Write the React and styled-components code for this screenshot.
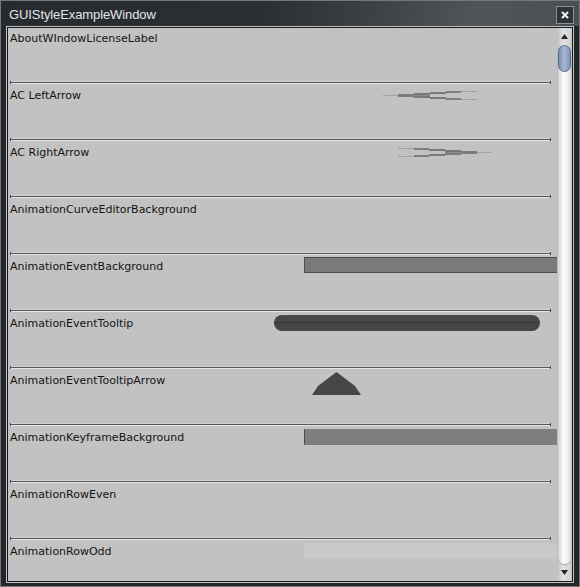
import React from 'react';
import styled, { createGlobalStyle } from 'styled-components';

const GlobalStyle = createGlobalStyle`
  html, body {
    margin: 0;
    padding: 0;
    background: #1f2226;
  }
`;

const Window = styled.div`
  width: 580px;
  height: 587px;
  box-sizing: border-box;
  border: 1px solid #74787c;
  background: #23272b;
  padding: 0 5px 3px 5px;
  display: flex;
  flex-direction: column;
  overflow: hidden;
`;

const TitleBar = styled.div`
  height: 25px;
  margin: 0 -5px;
  padding: 0 5px 0 8px;
  display: flex;
  align-items: center;
  justify-content: space-between;
  background: linear-gradient(100deg, #272b30 0%, #2b2f34 45%, #3a3f44 62%, #50555a 82%, #4a4f54 100%);
`;

const Title = styled.span`
  font-family: 'Liberation Sans', Arial, sans-serif;
  font-size: 13px;
  color: #e4e6e8;
  padding-top: 2px;
  letter-spacing: -0.1px;
`;

const CloseButton = styled.button`
  width: 18px;
  height: 18px;
  margin-top: 3px;
  padding: 0;
  box-sizing: border-box;
  border: 1px solid #8c9094;
  background: #30343a;
  display: flex;
  align-items: center;
  justify-content: center;
`;

const Panel = styled.div`
  flex: 1;
  min-height: 0;
  border: 1px solid #bfc2c5;
  display: flex;
`;

const Content = styled.div`
  flex: 1;
  min-height: 0;
  border: 1px solid #17191c;
  background: #c2c2c2;
  display: flex;
  overflow: hidden;
`;

const List = styled.div`
  flex: 1;
  min-width: 0;
  overflow: hidden;
`;

const Row = styled.div`
  height: 57px;
  padding-left: 2px;
  display: flex;
  flex-direction: column;
`;

const RowBody = styled.div`
  height: 53px;
  display: grid;
  grid-template-columns: 264px 1fr;
  align-items: start;
`;

const Label = styled.div`
  font-family: 'DejaVu Sans', Verdana, sans-serif;
  font-size: 11px;
  line-height: 13px;
  color: #141414;
  padding-top: 4px;
  white-space: nowrap;
`;

const Sample = styled.div`
  margin-top: ${(p) => p.$top || 0}px;
  margin-left: ${(p) => p.$left || 0}px;
  display: flex;
`;

const Rule = styled.div`
  height: 3px;
  margin-right: 6px;
  display: flex;
  align-items: center;
`;

const Tick = styled.div`
  width: 1px;
  height: 3px;
  background: #4a4a4a;
`;

const RuleLine = styled.div`
  flex: 1;
  height: 1px;
  background: #565656;
  box-shadow: 0 1px 0 #e6e6e6, 0 -1px 0 #d2d2d2;
`;

const FlatBar = styled.div`
  flex: 1;
  height: 16px;
  box-sizing: border-box;
  background: ${(p) => p.$fill};
  border-left: 1px solid ${(p) => p.$edge};
  border-top: 1px solid ${(p) => (p.$framed ? p.$edge : p.$fill)};
  border-bottom: 1px solid ${(p) => (p.$framed ? p.$edge : p.$fill)};
`;

const Tooltip = styled.div`
  width: 266px;
  height: 16px;
  border-radius: 8px;
  background: linear-gradient(to bottom, #484848 0, #464646 7px, #363636 7px, #363636 8px, #444444 8px, #464646 100%);
`;

const Scrollbar = styled.div`
  width: 15px;
  flex: none;
  display: flex;
  flex-direction: column;
  align-items: center;
  background: linear-gradient(to right, #bdbdbd, #e2e2e2 40%, #d6d6d6 80%, #c4c4c4);
`;

const ArrowButton = styled.div`
  height: 17px;
  width: 100%;
  display: flex;
  align-items: center;
  justify-content: center;
`;

const Track = styled.div`
  flex: 1;
  width: 13px;
  border-radius: 7px;
  display: flex;
  flex-direction: column;
  background: linear-gradient(to right, #cfcfcf, #fbfbfb 40%, #f2f2f2 70%, #d8d8d8);
  box-shadow: 0 1px 1px rgba(0, 0, 0, 0.25);
`;

const Thumb = styled.div`
  height: 27px;
  box-sizing: border-box;
  border-radius: 7px;
  border: 1px solid #58698a;
  background: linear-gradient(to right, #7a8fb2, #a6b7d1 45%, #9aadc9 65%, #8095b8);
`;

const LineArrow = ({ flip }) => (
  <svg width="94" height="10" viewBox="0 0 94 10" style={flip ? { transform: 'scaleX(-1)' } : undefined}>
    <rect x="0" y="4" width="15" height="1" fill="#a2a2a2" />
    <rect x="15" y="3" width="16" height="3" fill="#7c7c7c" />
    <rect x="31" y="2" width="16" height="2" fill="#787878" />
    <rect x="31" y="4" width="16" height="1" fill="#8c8c8c" />
    <rect x="31" y="5" width="16" height="2" fill="#7a7a7a" />
    <rect x="47" y="1" width="16" height="2" fill="#7a7a7a" />
    <rect x="47" y="6" width="16" height="2" fill="#7a7a7a" />
    <rect x="63" y="0" width="15" height="2" fill="#7e7e7e" />
    <rect x="63" y="7" width="15" height="2" fill="#7e7e7e" />
    <rect x="78" y="0" width="16" height="1" fill="#a0a0a0" />
    <rect x="78" y="8" width="16" height="1" fill="#a0a0a0" />
  </svg>
);

const TooltipArrow = () => (
  <svg width="49" height="24" viewBox="0 0 49 24">
    <polygon points="24.5,0 6,14 0,23 49,23 43,14" fill="#464646" />
  </svg>
);

const styleRows = [
  { name: 'AboutWIndowLicenseLabel' },
  { name: 'AC LeftArrow', left: 109, top: 6, sample: <LineArrow /> },
  { name: 'AC RightArrow', left: 124, top: 6, sample: <LineArrow flip /> },
  { name: 'AnimationCurveEditorBackground' },
  {
    name: 'AnimationEventBackground',
    left: 30,
    top: 1,
    sample: <FlatBar $fill="#7a7a7a" $edge="#4e4e4e" $framed />,
  },
  { name: 'AnimationEventTooltip', left: 0, top: 2, sample: <Tooltip /> },
  { name: 'AnimationEventTooltipArrow', left: 38, top: 2, sample: <TooltipArrow /> },
  {
    name: 'AnimationKeyframeBackground',
    left: 30,
    top: 2,
    sample: <FlatBar $fill="#7e7e7e" $edge="#4a4a4a" />,
  },
  { name: 'AnimationRowEven' },
  {
    name: 'AnimationRowOdd',
    left: 30,
    top: 2,
    sample: <FlatBar $fill="#c9c9c9" $edge="#c9c9c9" />,
  },
];

const App = () => {
  return (
    <>
      <GlobalStyle />
      <Window>
        <TitleBar>
          <Title>GUIStyleExampleWindow</Title>
          <CloseButton aria-label="Close">
            <svg width="8" height="8" viewBox="0 0 8 8">
              <path d="M1 1 L7 7 M7 1 L1 7" stroke="#f2f2f2" strokeWidth="2" />
            </svg>
          </CloseButton>
        </TitleBar>
        <Panel>
          <Content>
            <List>
              {styleRows.map((row) => (
                <Row key={row.name}>
                  <RowBody>
                    <Label>{row.name}</Label>
                    {row.sample && (
                      <Sample $left={row.left} $top={row.top}>
                        {row.sample}
                      </Sample>
                    )}
                  </RowBody>
                  <Rule>
                    <Tick />
                    <RuleLine />
                    <Tick />
                  </Rule>
                </Row>
              ))}
            </List>
            <Scrollbar>
              <ArrowButton>
                <svg width="7" height="5" viewBox="0 0 7 5">
                  <polygon points="3.5,0 7,5 0,5" fill="#262626" />
                </svg>
              </ArrowButton>
              <Track>
                <Thumb />
              </Track>
              <ArrowButton>
                <svg width="7" height="5" viewBox="0 0 7 5">
                  <polygon points="0,0 7,0 3.5,5" fill="#262626" />
                </svg>
              </ArrowButton>
            </Scrollbar>
          </Content>
        </Panel>
      </Window>
    </>
  );
};

export default App;
